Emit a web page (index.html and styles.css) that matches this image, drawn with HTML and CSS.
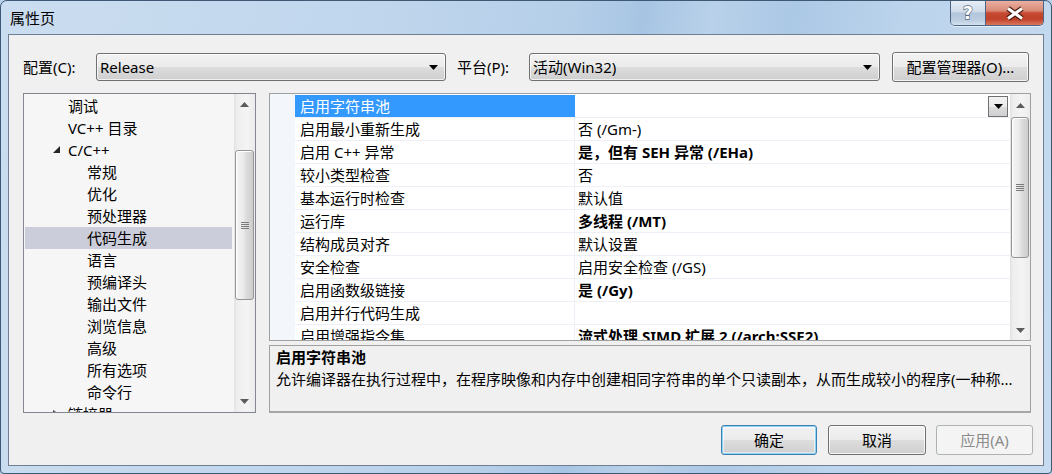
FILE: index.html
```html
<!DOCTYPE html>
<html lang="zh-CN">
<head>
<meta charset="utf-8">
<title>属性页</title>
<link rel="stylesheet" href="styles.css">
</head>
<body>
<div class="window">
  <div class="titlebar">
    <span class="title">属性页</span>
    <div class="caption">
      <div class="cap-help">
        <svg width="16" height="20" viewBox="0 0 16 20"><text x="8" y="16" text-anchor="middle" class="qmark">?</text></svg>
      </div>
      <div class="cap-close">
        <svg width="22" height="15" viewBox="0 0 22 15"><path d="M4 2.5 L18 12.5 M18 2.5 L4 12.5" stroke="#4a1c12" stroke-width="5.4"/><path d="M4 2.5 L18 12.5 M18 2.5 L4 12.5" stroke="#fff" stroke-width="3"/></svg>
      </div>
    </div>
  </div>
  <div class="client">
    <div class="toprow">
      <span class="lbl lbl-config">配置(C):</span>
      <div class="combo combo-config"><span class="combo-text">Release</span><svg class="combo-arrow" width="9" height="5" viewBox="0 0 9 5"><path d="M0 0H9L4.5 5Z" fill="#000"/></svg></div>
      <span class="lbl lbl-plat">平台(P):</span>
      <div class="combo combo-plat"><span class="combo-text">活动(Win32)</span><svg class="combo-arrow" width="9" height="5" viewBox="0 0 9 5"><path d="M0 0H9L4.5 5Z" fill="#000"/></svg></div>
      <div class="btn btn-mgr">配置管理器(O)...</div>
    </div>
    <div class="main">
      <div class="tree">
        <div class="tree-list">
          <div class="titem">调试</div>
          <div class="titem">VC++ 目录</div>
          <div class="titem"><span class="exp"></span>C/C++</div>
          <div class="titem l2">常规</div>
          <div class="titem l2">优化</div>
          <div class="titem l2">预处理器</div>
          <div class="titem l2 sel">代码生成</div>
          <div class="titem l2">语言</div>
          <div class="titem l2">预编译头</div>
          <div class="titem l2">输出文件</div>
          <div class="titem l2">浏览信息</div>
          <div class="titem l2">高级</div>
          <div class="titem l2">所有选项</div>
          <div class="titem l2">命令行</div>
          <div class="titem"><svg class="col" width="6" height="9" viewBox="0 0 6 9"><path d="M0.5 0.5 L5.5 4.5 L0.5 8.5Z" fill="none" stroke="#444"/></svg>链接器</div>
        </div>
        <div class="vscroll vs-tree">
          <div class="sb-btn sb-up"><svg width="9" height="5" viewBox="0 0 9 5"><path d="M0 5L4.5 0L9 5Z" fill="#5c5c5c"/></svg></div>
          <div class="sb-track">
            <div class="thumb thumb-tree"><svg width="8" height="7" viewBox="0 0 8 7"><path d="M0 0.5H8M0 2.5H8M0 4.5H8M0 6.5H8" stroke="#7b7b7b"/></svg></div>
          </div>
          <div class="sb-btn sb-down"><svg width="9" height="5" viewBox="0 0 9 5"><path d="M0 0H9L4.5 5Z" fill="#5c5c5c"/></svg></div>
        </div>
      </div>
      <div class="rightcol">
        <div class="grid">
          <div class="gutter"></div>
          <div class="rows">
            <div class="row sel"><div class="name">启用字符串池</div><div class="value"><span class="vtext"></span><div class="dd"><svg width="9" height="5" viewBox="0 0 9 5"><path d="M0 0H9L4.5 5Z" fill="#000"/></svg></div></div></div>
            <div class="row"><div class="name">启用最小重新生成</div><div class="value">否 (/Gm-)</div></div>
            <div class="row"><div class="name">启用 C++ 异常</div><div class="value b">是，但有 SEH 异常 (/EHa)</div></div>
            <div class="row"><div class="name">较小类型检查</div><div class="value">否</div></div>
            <div class="row"><div class="name">基本运行时检查</div><div class="value">默认值</div></div>
            <div class="row"><div class="name">运行库</div><div class="value b">多线程 (/MT)</div></div>
            <div class="row"><div class="name">结构成员对齐</div><div class="value">默认设置</div></div>
            <div class="row"><div class="name">安全检查</div><div class="value">启用安全检查 (/GS)</div></div>
            <div class="row"><div class="name">启用函数级链接</div><div class="value b">是 (/Gy)</div></div>
            <div class="row"><div class="name">启用并行代码生成</div><div class="value"></div></div>
            <div class="row"><div class="name">启用增强指令集</div><div class="value b">流式处理 SIMD 扩展 2 (/arch:SSE2)</div></div>
          </div>
          <div class="vscroll vs-grid">
            <div class="sb-btn sb-up2"><svg width="9" height="5" viewBox="0 0 9 5"><path d="M0 5L4.5 0L9 5Z" fill="#5c5c5c"/></svg></div>
            <div class="sb-track">
              <div class="thumb thumb-grid"><svg width="8" height="7" viewBox="0 0 8 7"><path d="M0 0.5H8M0 2.5H8M0 4.5H8M0 6.5H8" stroke="#7b7b7b"/></svg></div>
            </div>
            <div class="sb-btn sb-down2"><svg width="9" height="5" viewBox="0 0 9 5"><path d="M0 0H9L4.5 5Z" fill="#5c5c5c"/></svg></div>
          </div>
        </div>
        <div class="desc">
          <div class="desc-title">启用字符串池</div>
          <div class="desc-text">允许编译器在执行过程中，在程序映像和内存中创建相同字符串的单个只读副本，从而生成较小的程序(一种称...</div>
        </div>
      </div>
    </div>
    <div class="buttons">
      <div class="btn btn-ok">确定</div>
      <div class="btn btn-cancel">取消</div>
      <div class="btn btn-apply">应用(A)</div>
    </div>
  </div>
</div>
</body>
</html>
```

FILE: styles.css
```css
html, body {
  margin: 0;
  padding: 0;
  width: 1052px;
  height: 474px;
  overflow: hidden;
}
body {
  font-family: "Noto Sans", "Noto Sans CJK SC", sans-serif;
  font-size: 15px;
  color: #000;
  background: #b9d1ea;
}
.window {
  width: 1052px;
  height: 474px;
  box-sizing: border-box;
  border: 1px solid #3f5874;
  border-radius: 7px 7px 4px 4px;
  background: linear-gradient(100deg, #cbddf0 0%, #c1d7ed 30%, #b6cfe9 50%, #a7c5e3 57%, #b9d1ea 63%, #abc8e5 70%, #bcd4ec 80%, #c6dbef 100%);
  display: flex;
  flex-direction: column;
  overflow: hidden;
}
.titlebar {
  height: 33px;
  display: flex;
  align-items: flex-start;
  flex: none;
}
.title {
  padding: 6px 0 0 9px;
  line-height: 22px;
  font-size: 15px;
}
.caption {
  margin-left: auto;
  margin-right: 7px;
  display: flex;
  height: 24px;
  border: 1px solid #4c6584;
  border-top: none;
  border-radius: 0 0 5px 5px;
  overflow: hidden;
  box-shadow: 0 1px 0 rgba(255,255,255,0.6);
}
.cap-help {
  width: 34px;
  height: 24px;
  border-right: 1px solid #4c6584;
  background: linear-gradient(#e6eef7 0%, #d0dcea 45%, #b3c5da 50%, #bccde1 80%, #d3e1ef 100%);
  display: flex;
  align-items: center;
  justify-content: center;
}
.qmark {
  font-family: "DejaVu Sans", sans-serif;
  font-size: 17px;
  font-weight: bold;
  fill: #ffffff;
  stroke: #55677d;
  stroke-width: 1.3px;
  paint-order: stroke;
}
.cap-close {
  width: 57px;
  height: 24px;
  background: linear-gradient(#eab0a2 0%, #d98a77 40%, #c74a32 50%, #c0412a 75%, #d9785c 100%);
  display: flex;
  align-items: center;
  justify-content: center;
}
.client {
  flex: none;
  margin: 0 7px;
  height: 432px;
  box-sizing: border-box;
  border: 1px solid #6f7e90;
  background: #f0f0f0;
  display: flex;
  flex-direction: column;
}
.toprow {
  display: flex;
  align-items: center;
  height: 30px;
  margin-top: 17px;
  padding-left: 14px;
}
.lbl {
  line-height: 20px;
  white-space: nowrap;
}
.lbl-config { width: 73px; }
.lbl-plat { width: 72px; margin-left: 11px; }
.combo {
  height: 28px;
  box-sizing: border-box;
  border: 1px solid #707070;
  border-radius: 3px;
  background: linear-gradient(#f2f2f2 0%, #ebebeb 50%, #dddddd 50%, #cfcfcf 100%);
  box-shadow: inset 0 0 0 1px rgba(255,255,255,0.7);
  display: flex;
  align-items: center;
  padding: 0 7px 0 3px;
}
.combo-config { width: 350px; }
.combo-plat { width: 351px; }
.combo-text {
  flex: 1;
  line-height: 20px;
}
.combo-arrow { display: block; }
.btn {
  height: 30px;
  box-sizing: border-box;
  border: 1px solid #707070;
  border-radius: 3px;
  background: linear-gradient(#f2f2f2 0%, #ebebeb 50%, #dddddd 50%, #cfcfcf 100%);
  box-shadow: inset 0 0 0 1px rgba(255,255,255,0.75);
  display: flex;
  align-items: center;
  justify-content: center;
  line-height: 20px;
  white-space: nowrap;
}
.btn-mgr {
  width: 137px;
  margin-left: 12px;
}
.main {
  display: flex;
  margin-top: 11px;
  padding-left: 14px;
  height: 320px;
}
.tree {
  width: 233px;
  height: 320px;
  box-sizing: border-box;
  border: 1px solid #828790;
  background: #f6f6f6;
  display: flex;
  flex: none;
}
.tree-list {
  flex: 1;
  padding-top: 1px;
  overflow: hidden;
}
.titem {
  height: 22px;
  line-height: 22px;
  padding-left: 44px;
  white-space: nowrap;
  position: relative;
}
.titem.l2 { padding-left: 63px; }
.titem.sel {
  background: #cbcdda;
  margin: 0 2px 0 1px;
  padding-left: 62px;
}
.exp {
  position: absolute;
  left: 29px;
  top: 7px;
  width: 0;
  height: 0;
  border-right: 7px solid #262626;
  border-top: 7px solid transparent;
}
.col {
  position: absolute;
  left: 29px;
  top: 7px;
}
.vscroll {
  flex: none;
  display: flex;
  flex-direction: column;
  background: linear-gradient(to right, #e2e2e2 0%, #eeeeee 15%, #f4f4f4 60%, #ececec 100%);
}
.vs-tree { width: 21px; }
.vs-grid { width: 20px; }
.sb-btn {
  display: flex;
  align-items: center;
  justify-content: center;
  flex: none;
}
.sb-up { height: 21px; }
.sb-down { height: 22px; }
.sb-up2 { height: 22px; }
.sb-down2 { height: 20px; }
.sb-track {
  flex: 1;
}
.thumb {
  box-sizing: border-box;
  border: 1px solid #959595;
  border-radius: 3px;
  margin: 0 1px;
  background: linear-gradient(to right, #f4f4f4 0%, #ececec 40%, #dcdcdc 60%, #cdcdcd 100%);
  box-shadow: inset 1px 1px 0 #fff;
  display: flex;
  align-items: center;
  justify-content: center;
}
.thumb-tree {
  margin-top: 35px;
  height: 150px;
}
.thumb-grid {
  margin-top: 1px;
  height: 141px;
}
.rightcol {
  width: 762px;
  margin-left: 13px;
  display: flex;
  flex-direction: column;
}
.grid {
  height: 248px;
  box-sizing: border-box;
  border: 1px solid #a0a0a0;
  background: #fff;
  display: flex;
  overflow: hidden;
}
.gutter {
  width: 25px;
  flex: none;
  background: #f3f6fb;
}
.rows {
  flex: 1;
  padding-top: 1px;
  overflow: hidden;
}
.row {
  display: flex;
  height: 23px;
  box-sizing: border-box;
  border-bottom: 1px solid #edf1f7;
}
.name {
  width: 280px;
  flex: none;
  box-sizing: border-box;
  padding-left: 5px;
  border-right: 1px solid #edf1f7;
  line-height: 22px;
  white-space: nowrap;
}
.value {
  flex: 1;
  padding-left: 3px;
  line-height: 22px;
  white-space: nowrap;
  display: flex;
  align-items: center;
}
.value.b { font-weight: bold; }
.row.sel .name {
  background: #3399ff;
  color: #fff;
  border-right-color: #3399ff;
}
.vtext { flex: 1; }
.dd {
  width: 20px;
  height: 21px;
  box-sizing: border-box;
  margin-right: 2px;
  border: 1px solid #707070;
  background: linear-gradient(#f2f2f2 0%, #ebebeb 50%, #dddddd 50%, #cfcfcf 100%);
  display: flex;
  align-items: center;
  justify-content: center;
}
.desc {
  margin-top: 4px;
  height: 68px;
  box-sizing: border-box;
  border: 1px solid #a0a0a0;
  border-bottom: 2px solid #a6a6a6;
  padding: 0 6px;
  background: #f0f0f0;
}
.desc-title {
  font-weight: bold;
  line-height: 22px;
}
.desc-text {
  line-height: 23px;
  white-space: nowrap;
  overflow: hidden;
}
.buttons {
  display: flex;
  justify-content: flex-end;
  margin-top: 12px;
  padding-right: 10px;
}
.btn-ok {
  width: 96px;
  border-color: #3c7fb1;
  box-shadow: inset 0 0 0 1px #8fd3f2, inset 0 0 0 2px rgba(255,255,255,0.5);
}
.btn-cancel {
  width: 98px;
  margin-left: 11px;
}
.btn-apply {
  width: 97px;
  margin-left: 10px;
  border-color: #adb2b5;
  background: #f4f4f4;
  box-shadow: none;
  color: #8b8b8b;
}
```
